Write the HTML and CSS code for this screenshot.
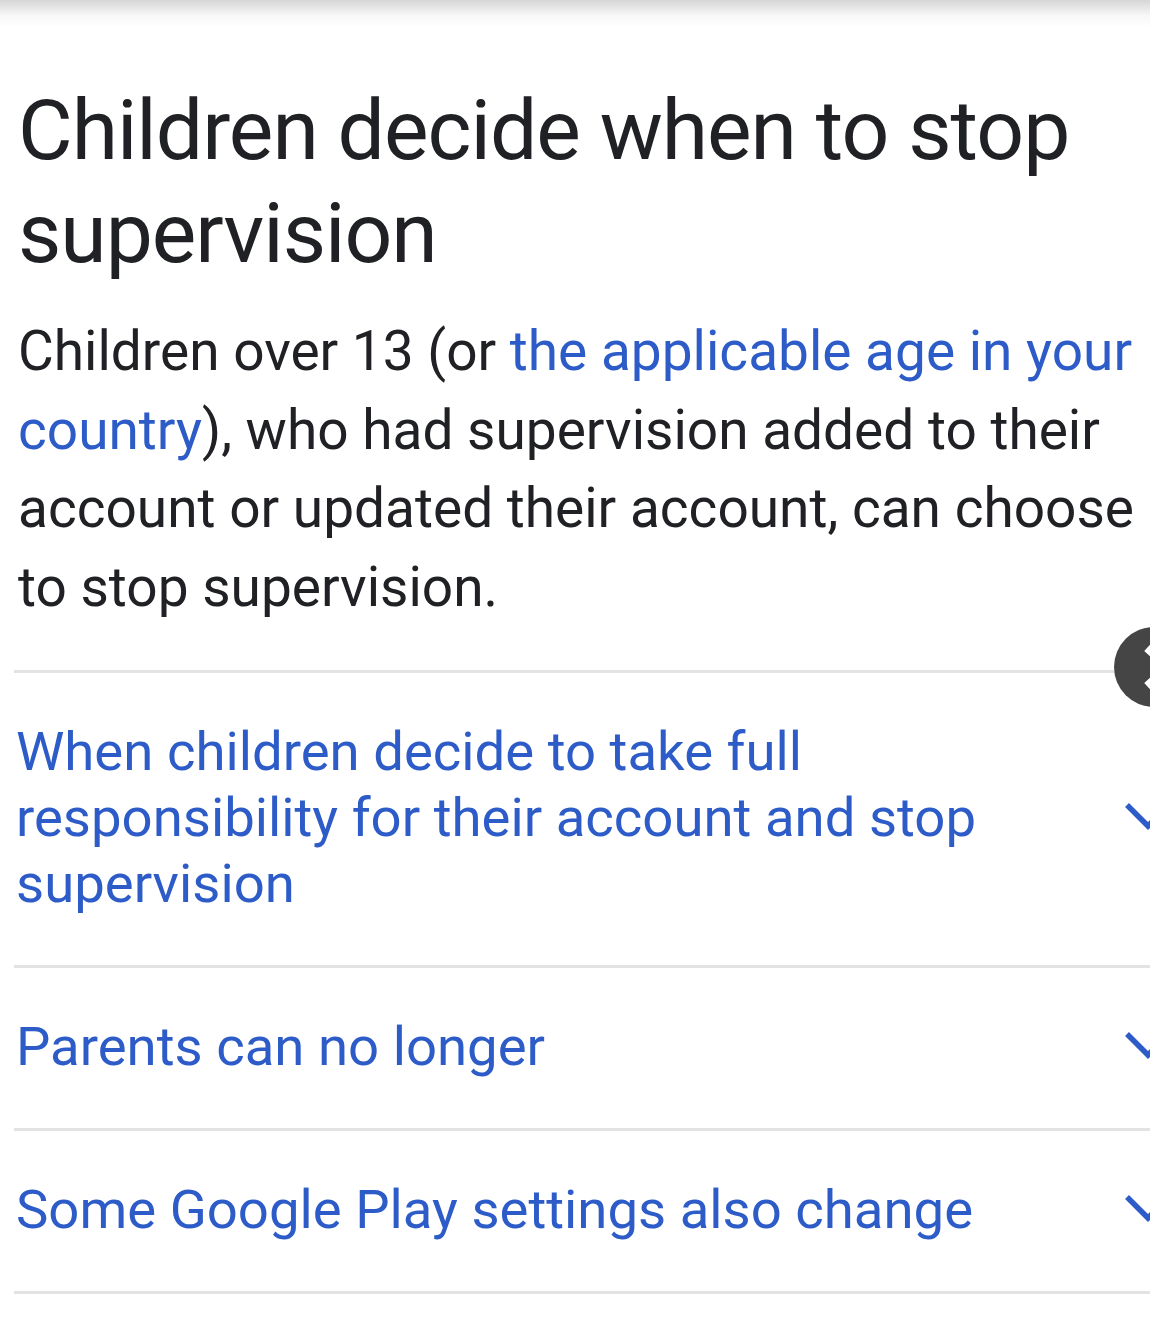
FILE: index.html
```html
<!DOCTYPE html>
<html lang="en">
<head>
<meta charset="utf-8">
<title>Children decide when to stop supervision</title>
<link rel="stylesheet" href="styles.css">
</head>
<body>
<div class="top-shade"></div>
<main class="page">
  <h1 class="title">Children decide when to stop supervision</h1>
  <p class="intro"><span>Children over 13 (or </span><a class="link" href="#">the applicable age in your</a> <a class="link" href="#">country</a><span>), who had supervision added to their</span> <span>account or updated their account, can choose to stop supervision.</span></p>
  <div class="accordion">
    <div class="item">
      <span class="label">When children decide to take full responsibility for their account and stop supervision</span>
      <svg class="chev" viewBox="0 0 56 56"><path d="M6 16L27 37L48 16" /></svg>
    </div>
    <div class="item">
      <span class="label">Parents can no longer</span>
      <svg class="chev" viewBox="0 0 56 56"><path d="M6 16L27 37L48 16" /></svg>
    </div>
    <div class="item">
      <span class="label">Some Google Play settings also change</span>
      <svg class="chev" viewBox="0 0 56 56"><path d="M6 16L27 37L48 16" /></svg>
    </div>
  </div>
</main>
<div class="fab">
  <svg class="fab-icon" viewBox="0 0 80 80"><path d="M33 21l20 19-20 19" /></svg>
</div>
</body>
</html>
```
FILE: styles.css
```css
html, body {
  margin: 0;
  padding: 0;
  background: #ffffff;
  overflow: hidden;
}
body {
  width: 1150px;
  height: 1326px;
  position: relative;
  font-family: Roboto, "Noto Sans", sans-serif;
  color: #202124;
}
.top-shade {
  position: absolute;
  left: 0;
  top: 0;
  width: 100%;
  height: 28px;
  background: linear-gradient(to bottom, rgba(0,0,0,0.16), rgba(0,0,0,0.03) 55%, rgba(0,0,0,0));
  pointer-events: none;
}
.page {
  width: 1177px;
  box-sizing: border-box;
  padding: 79px 0 0 18px;
}
.title {
  margin: 0;
  font-size: 84px;
  font-weight: 400;
  line-height: 103px;
  letter-spacing: -1px;
  color: #202124;
}
.intro {
  margin: 27px 0 0 0;
  font-size: 55px;
  line-height: 78.5px;
  color: #202124;
}
.link {
  color: #2d5cc8;
  text-decoration: none;
}
.accordion {
  margin: 44px 0 0 -4px;
  border-top: 3px solid #e3e3e3;
}
.item {
  display: flex;
  align-items: center;
  gap: 40px;
  padding: 45px 0 49px 2px;
  border-bottom: 3px solid #e3e3e3;
}
.label {
  flex: 1;
  font-size: 54.5px;
  line-height: 66px;
  color: #2d5cc8;
}
.chev {
  width: 56px;
  height: 56px;
  flex: none;
}
.chev path {
  fill: none;
  stroke: #2d5cc8;
  stroke-width: 5.5;
}
.fab {
  position: absolute;
  left: 1114px;
  top: 627px;
  width: 80px;
  height: 80px;
  border-radius: 50%;
  background: #454545;
}
.fab-icon {
  width: 80px;
  height: 80px;
  display: block;
}
.fab-icon path {
  fill: none;
  stroke: #ffffff;
  stroke-width: 8;
}
```
